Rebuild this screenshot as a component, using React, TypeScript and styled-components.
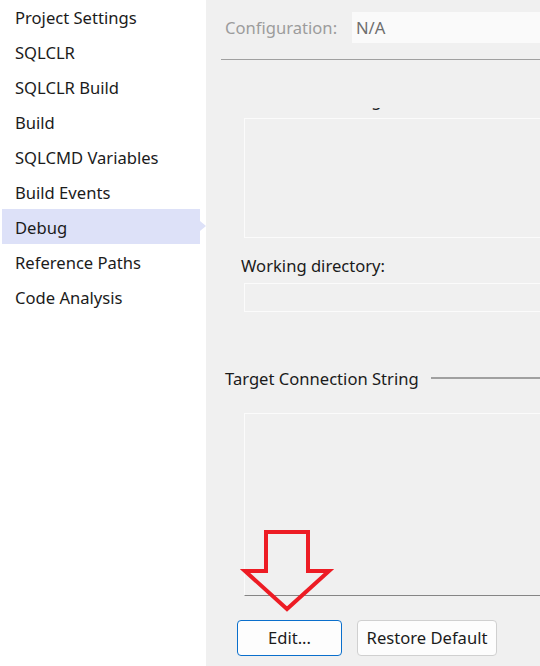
import React from "react";
import styled, { createGlobalStyle } from "styled-components";

const Global = createGlobalStyle`
  html, body { margin: 0; padding: 0; }
  body {
    width: 540px;
    height: 666px;
    overflow: hidden;
    font-family: "Noto Sans", "Open Sans", sans-serif;
    font-size: 16.6px;
    color: #1b1b1b;
  }
`;

const Window = styled.div`
  position: relative;
  display: flex;
  width: 540px;
  height: 666px;
  overflow: hidden;
`;

const Sidebar = styled.nav`
  flex: 0 0 206px;
  background: #ffffff;
  display: flex;
  flex-direction: column;
  margin-top: -1px;
`;

const NavItem = styled.div<{ $active?: boolean }>`
  position: relative;
  height: 35px;
  display: flex;
  align-items: center;
  padding-left: 13px;
  padding-top: 2px;
  margin-left: 2px;
  width: 198px;
  box-sizing: border-box;
  font-size: 16.6px;
  color: #1b1b1b;
  background: ${(p) => (p.$active ? "#dde1f8" : "transparent")};

  &::after {
    content: "";
    display: ${(p) => (p.$active ? "block" : "none")};
    position: absolute;
    right: -6px;
    top: 12px;
    border-left: 6px solid #dde1f8;
    border-top: 5.5px solid transparent;
    border-bottom: 5.5px solid transparent;
  }
`;

const Panel = styled.main`
  flex: 1;
  background: #f0f0f0;
  display: flex;
  flex-direction: column;
  min-width: 0;
`;

const ConfigRow = styled.div`
  margin-top: 12px;
  height: 31px;
  display: flex;
  align-items: center;
  padding-left: 19px;
`;

const ConfigLabel = styled.span`
  width: 127px;
  color: #9c9c9c;
  font-size: 16.6px;
`;

const ConfigField = styled.div`
  flex: 1;
  height: 31px;
  background: #fafafa;
  display: flex;
  align-items: center;
  padding-left: 4px;
  color: #6e6e6e;
  font-size: 16.6px;
`;

const Rule = styled.div`
  margin-top: 16px;
  margin-left: 15px;
  height: 1px;
  background: #a0a0a0;
`;

const ClippedLabel = styled.div`
  margin-top: 48px;
  height: 3px;
  overflow: hidden;
  display: flex;
  align-items: flex-end;
  padding-left: 31px;
  font-size: 16.6px;
  line-height: 20px;
  color: #1b1b1b;
  & > span {
    display: block;
    white-space: nowrap;
    margin-bottom: 1px;
  }
`;

const Field = styled.div<{ $h: number; $mt: number; $dark?: boolean }>`
  margin-top: ${(p) => p.$mt}px;
  margin-left: 38px;
  margin-right: -4px;
  height: ${(p) => p.$h}px;
  box-sizing: border-box;
  border: 1px solid #fbfbfb;
  border-bottom-color: ${(p) => (p.$dark ? "#858585" : "#fbfbfb")};
`;

const FieldLabel = styled.div<{ $mt: number }>`
  margin-top: ${(p) => p.$mt}px;
  padding-left: 35px;
  height: 20px;
  line-height: 20px;
  font-size: 16.6px;
  color: #1b1b1b;
`;

const GroupHeading = styled.div`
  margin-top: 57px;
  height: 20px;
  display: flex;
  align-items: flex-start;
  padding-left: 19px;
  gap: 12px;
  line-height: 20px;
  font-size: 16.6px;
  color: #1b1b1b;
`;

const HeadingLine = styled.div`
  flex: 1;
  height: 2px;
  margin-top: 8px;
  background: #a0a0a0;
`;

const ButtonRow = styled.div`
  margin-top: 24px;
  padding-left: 31px;
  display: flex;
  gap: 15px;
`;

const Button = styled.button<{ $w: number; $primary?: boolean }>`
  width: ${(p) => p.$w}px;
  height: 36px;
  box-sizing: border-box;
  border-radius: 4px;
  background: #fdfdfd;
  border: 1px solid ${(p) => (p.$primary ? "#0a6fcc" : "#d0d0d0")};
  font-family: "Noto Sans", "Open Sans", sans-serif;
  font-size: 16.6px;
  color: #1b1b1b;
  padding: 0 0 1px;
`;

const Annotation = styled.svg`
  position: absolute;
  left: 0;
  top: 0;
  pointer-events: none;
`;

const items = [
  "Project Settings",
  "SQLCLR",
  "SQLCLR Build",
  "Build",
  "SQLCMD Variables",
  "Build Events",
  "Debug",
  "Reference Paths",
  "Code Analysis",
];

export default function App() {
  return (
    <>
      <Global />
      <Window>
        <Sidebar>
          {items.map((it) => (
            <NavItem key={it} $active={it === "Debug"}>
              {it}
            </NavItem>
          ))}
        </Sidebar>
        <Panel>
          <ConfigRow>
            <ConfigLabel>Configuration:</ConfigLabel>
            <ConfigField>N/A</ConfigField>
          </ConfigRow>
          <Rule />
          <ClippedLabel>
            <span>Command line arguments:</span>
          </ClippedLabel>
          <Field $mt={7} $h={120} />
          <FieldLabel $mt={18}>Working directory:</FieldLabel>
          <Field $mt={7} $h={29} />
          <GroupHeading>
            <span>Target Connection String</span>
            <HeadingLine />
          </GroupHeading>
          <Field $mt={24} $h={183} $dark />
          <ButtonRow>
            <Button $w={105} $primary>Edit...</Button>
            <Button $w={140}>Restore Default</Button>
          </ButtonRow>
        </Panel>
        <Annotation width="540" height="666" viewBox="0 0 540 666">
          <polygon
            points="266,532 308,532 308,571 329,571 287,609 245,571 266,571"
            fill="none"
            stroke="#ed1c24"
            strokeWidth="4"
            strokeLinejoin="miter"
          />
        </Annotation>
      </Window>
    </>
  );
}
